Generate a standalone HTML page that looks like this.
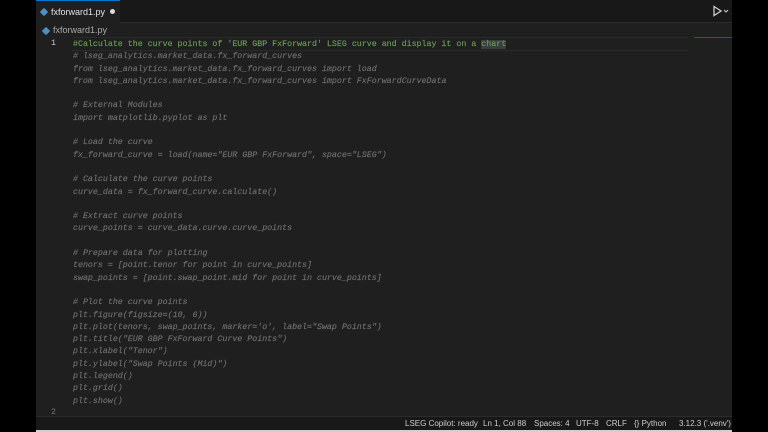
<!DOCTYPE html>
<html><head><style>
html,body{margin:0;padding:0;width:768px;height:432px;background:#000;overflow:hidden}
#ed{position:absolute;left:36px;top:0;width:696px;height:432px;background:#1f1f1f}
#tabs{position:absolute;left:0;top:0;width:696px;height:22px;background:#181818;border-bottom:1px solid #2b2b2b}
#tab{position:absolute;left:0;top:0;width:84px;height:23px;background:#1f1f1f;border-top:1px solid #0078d4;font:9px "Liberation Sans",sans-serif;color:#e0e0e0}
.py{position:absolute;width:6px;height:6px;background:#4d8fc4;transform:rotate(45deg);border-radius:1px}
#bc{position:absolute;left:17px;top:25px;font:9px "Liberation Sans",sans-serif;color:#a9a9a9}
.code{position:absolute;left:37px;top:39px;font:italic 8.3px/12.3px "Liberation Mono",monospace;color:#6e6e6e;white-space:pre;-webkit-text-stroke:0.15px #6e6e6e}
.ln{position:absolute;left:0;width:20px;text-align:right;font:8.3px "Liberation Mono",monospace}
#sb{position:absolute;left:0;top:416px;width:696px;height:13px;background:#181818;border-top:1px solid #2b2b2b;font:8px "Liberation Sans",sans-serif;color:#cccccc}
#sb span{position:absolute;top:2px}
</style></head><body>
<div id="ed">
<div id="tabs">
 <div id="tab"><div class="py" style="left:5px;top:8px"></div><span style="position:absolute;left:15px;top:6px">fxforward1.py</span><span style="position:absolute;left:74px;top:8px;width:5px;height:5px;border-radius:50%;background:#ddd"></span></div>
 <svg style="position:absolute;left:676px;top:5px" width="18" height="12"><path d="M2 1.5 L9 6 L2 10.5 Z" fill="none" stroke="#ccc" stroke-width="1.3"/><path d="M12 5 L14 7 L16 5" fill="none" stroke="#ccc" stroke-width="1"/></svg>
</div>
<div class="py" style="left:7px;top:28px"></div>
<div id="bc">fxforward1.py</div>
<div style="position:absolute;left:36px;top:37px;width:616px;height:12px;border-top:1px solid #2a2a2a;border-bottom:1px solid #2a2a2a"></div>
<div style="position:absolute;left:658px;top:37px;width:38px;height:1px;background:#3e5a34"></div>
<div class="ln" style="top:39px;color:#cccccc">1</div>
<div class="ln" style="top:408px;color:#6e7681">2</div>
<div class="code"><span style="font-style:normal;color:#6a9955;-webkit-text-stroke:0.15px #6a9955">#Calculate the curve points of 'EUR GBP FxForward' LSEG curve and display it on a <span style="background:#3a3d41">chart</span></span>
# lseg_analytics.market_data.fx_forward_curves
from lseg_analytics.market_data.fx_forward_curves import load
from lseg_analytics.market_data.fx_forward_curves import FxForwardCurveData

# External Modules
import matplotlib.pyplot as plt

# Load the curve
fx_forward_curve = load(name="EUR GBP FxForward", space="LSEG")

# Calculate the curve points
curve_data = fx_forward_curve.calculate()

# Extract curve points
curve_points = curve_data.curve.curve_points

# Prepare data for plotting
tenors = [point.tenor for point in curve_points]
swap_points = [point.swap_point.mid for point in curve_points]

# Plot the curve points
plt.figure(figsize=(10, 6))
plt.plot(tenors, swap_points, marker='o', label="Swap Points")
plt.title("EUR GBP FxForward Curve Points")
plt.xlabel("Tenor")
plt.ylabel("Swap Points (Mid)")
plt.legend()
plt.grid()
plt.show()</div>
<div id="sb">
<span style="left:369px">LSEG Copilot: ready</span>
<span style="left:447px">Ln 1, Col 88</span>
<span style="left:498px">Spaces: 4</span>
<span style="left:540px">UTF-8</span>
<span style="left:570px">CRLF</span>
<span style="left:598px">{} Python</span>
<span style="left:643px">3.12.3 ('.venv')</span>
</div>
<div style="position:absolute;left:0;top:430px;width:696px;height:2px;background:#d0d0d0"></div>
</div>
</body></html>
